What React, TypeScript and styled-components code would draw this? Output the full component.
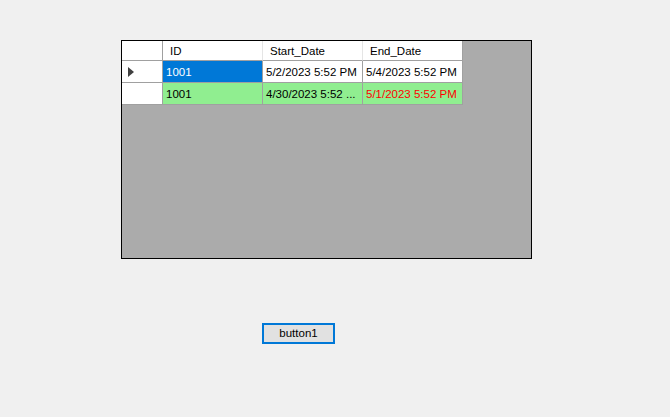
import React from "react";
import styled, { createGlobalStyle } from "styled-components";

const Global = createGlobalStyle`
  html, body { margin: 0; padding: 0; background: #f0f0f0; }
  body { font-family: "Segoe UI", "Liberation Sans", Arial, sans-serif; width: 670px; height: 417px; overflow: hidden; }
`;

const Form = styled.div`
  width: 670px;
  height: 417px;
  display: flex;
  flex-direction: column;
  padding: 40px 0 0 121px;
  box-sizing: border-box;
`;

const GridView = styled.div`
  width: 411px;
  height: 219px;
  border: 1px solid #000;
  box-sizing: border-box;
  background: #ababab;
  display: flex;
  flex-direction: column;
  align-items: flex-start;
`;

const Row = styled.div<{ $header?: boolean }>`
  display: flex;
  height: ${(p) => (p.$header ? 20 : 22)}px;
`;

const RowHeader = styled.div`
  width: 41px;
  box-sizing: border-box;
  background: #fff;
  border-right: 1px solid #a0a0a0;
  border-bottom: 1px solid #a0a0a0;
  display: flex;
  align-items: center;
  padding-left: 6px;
  padding-top: 1px;
`;

const HeaderCell = styled.div<{ $last?: boolean }>`
  width: 100px;
  box-sizing: border-box;
  background: #fff;
  border-right: 1px solid ${(p) => (p.$last ? "#a0a0a0" : "#e5e5e5")};
  border-bottom: 1px solid #a0a0a0;
  color: #000;
  font-size: 11.5px;
  display: flex;
  align-items: center;
  padding-left: 7px;
  padding-top: 1px;
  white-space: nowrap;
`;

const Cell = styled.div<{ $bg: string; $color: string }>`
  width: 100px;
  box-sizing: border-box;
  background: ${(p) => p.$bg};
  color: ${(p) => p.$color};
  border-right: 1px solid #a0a0a0;
  border-bottom: 1px solid #a0a0a0;
  font-size: 11.5px;
  display: flex;
  align-items: center;
  padding-left: 3px;
  padding-top: 1px;
  white-space: nowrap;
  overflow: hidden;
`;

const Arrow = styled.div`
  width: 0;
  height: 0;
  border-top: 5px solid transparent;
  border-bottom: 5px solid transparent;
  border-left: 6px solid #404040;
`;

const ButtonArea = styled.div`
  display: flex;
  padding: 64px 0 0 141px;
`;

const Button = styled.button`
  width: 73px;
  height: 21px;
  box-sizing: border-box;
  border: 2px solid #0078d7;
  background: #e1e1e1;
  font-family: "Segoe UI", "Liberation Sans", Arial, sans-serif;
  font-size: 11.5px;
  color: #000;
  padding: 0;
  margin: 0;
  line-height: 17px;
`;

const rows = [
  {
    current: true,
    cells: [
      { text: "1001", bg: "#0078d7", color: "#fff" },
      { text: "5/2/2023 5:52 PM", bg: "#fff", color: "#000" },
      { text: "5/4/2023 5:52 PM", bg: "#fff", color: "#000" },
    ],
  },
  {
    current: false,
    cells: [
      { text: "1001", bg: "#90ee90", color: "#000" },
      { text: "4/30/2023 5:52 ...", bg: "#90ee90", color: "#000" },
      { text: "5/1/2023 5:52 PM", bg: "#90ee90", color: "#ff0000" },
    ],
  },
];

export default function App() {
  return (
    <>
      <Global />
      <Form>
        <GridView>
          <Row $header>
            <RowHeader />
            <HeaderCell>ID</HeaderCell>
            <HeaderCell>Start_Date</HeaderCell>
            <HeaderCell $last>End_Date</HeaderCell>
          </Row>
          {rows.map((r, i) => (
            <Row key={i}>
              <RowHeader>{r.current && <Arrow />}</RowHeader>
              {r.cells.map((c, j) => (
                <Cell key={j} $bg={c.bg} $color={c.color}>
                  {c.text}
                </Cell>
              ))}
            </Row>
          ))}
        </GridView>
        <ButtonArea>
          <Button>button1</Button>
        </ButtonArea>
      </Form>
    </>
  );
}
